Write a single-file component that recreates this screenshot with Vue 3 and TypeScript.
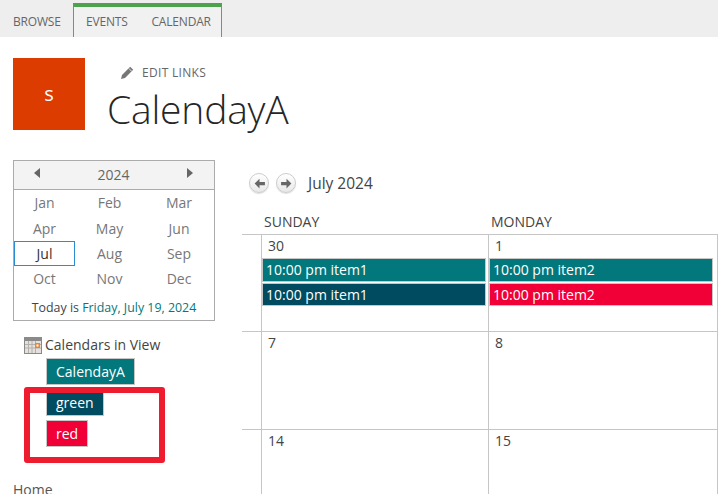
<script setup lang="ts">
const months: string[] = ['Jan','Feb','Mar','Apr','May','Jun','Jul','Aug','Sep','Oct','Nov','Dec']
interface Ev { text: string; color: string }
interface Cell { day: string; events: Ev[] }
const rows: Cell[][] = [
  [
    { day: '30', events: [{ text: '10:00 pm item1', color: 'teal' }, { text: '10:00 pm item1', color: 'navy' }] },
    { day: '1', events: [{ text: '10:00 pm item2', color: 'teal' }, { text: '10:00 pm item2', color: 'red' }] },
  ],
  [{ day: '7', events: [] }, { day: '8', events: [] }],
  [{ day: '14', events: [] }, { day: '15', events: [] }],
]
</script>

<template>
  <div class="page">
    <div class="ribbon">
      <div class="tab plain">BROWSE</div>
      <div class="ctx">
        <div class="tab">EVENTS</div>
        <div class="tab">CALENDAR</div>
      </div>
    </div>

    <div class="head">
      <div class="logo">s</div>
      <div class="titles">
        <div class="edit">
          <svg width="14" height="14" viewBox="0 0 14 14">
            <path d="M10.2 0.8 13.2 3.8 5 12 1 13 2 9z" fill="#777" />
            <path d="M8.8 2.4 11.6 5.2" stroke="#fff" stroke-width="0.8" />
          </svg>
          <span>EDIT LINKS</span>
        </div>
        <div class="title">CalendayA</div>
      </div>
    </div>

    <div class="body">
      <aside class="side">
        <div class="picker">
          <div class="pk-head">
            <span class="tri left"></span>
            <span class="year">2024</span>
            <span class="tri right"></span>
          </div>
          <div class="pk-grid">
            <div v-for="m in months" :key="m" class="mon" :class="{ sel: m === 'Jul' }">{{ m }}</div>
          </div>
          <div class="today">Today is <span class="link">Friday, July 19, 2024</span></div>
        </div>

        <div class="civ">
          <svg width="18" height="17" viewBox="0 0 18 17">
            <rect width="18" height="17" fill="#8a8a8a" />
            <rect x="1" y="4" width="16" height="12" fill="#e4e1dd" />
            <path d="M1 7.5h16M1 11h16M4.5 4v12M8 4v12M11.5 4v12" stroke="#b5b0ab" stroke-width="1" />
            <rect x="11" y="6" width="5" height="5" fill="#e8843a" />
            <rect x="12.5" y="7.5" width="2" height="2" fill="#fff" />
          </svg>
          <span>Calendars in View</span>
        </div>
        <div class="chips">
          <div class="chip teal">CalendayA</div>
          <div class="chip navy">green</div>
          <div class="chip red">red</div>
          <div class="annot"></div>
        </div>
        <div class="home">Home</div>
      </aside>

      <main class="main">
        <div class="nav">
          <span class="circ">
            <svg width="13" height="13" viewBox="0 0 12 12"><path d="M6 1.5 1.5 6 6 10.5V7.5H11V4.5H6z" fill="#666" /></svg>
          </span>
          <span class="circ">
            <svg width="13" height="13" viewBox="0 0 12 12"><path d="M6 1.5 10.5 6 6 10.5V7.5H1V4.5H6z" fill="#666" /></svg>
          </span>
          <span class="month">July 2024</span>
        </div>
        <div class="dow">
          <div>SUNDAY</div>
          <div>MONDAY</div>
        </div>
        <div class="grid">
          <div v-for="(row, i) in rows" :key="i" class="row">
            <div class="gutter"></div>
            <div v-for="cell in row" :key="cell.day" class="cell">
              <div class="day">{{ cell.day }}</div>
              <div v-for="(ev, j) in cell.events" :key="j" class="ev" :class="ev.color">{{ ev.text }}</div>
            </div>
          </div>
        </div>
      </main>
    </div>
  </div>
</template>

<style>
html, body { margin: 0; overflow: hidden; background: #fff; }
</style>

<style scoped>
.page {
  width: 718px;
  height: 494px;
  overflow: hidden;
  font-family: "Open Sans", "Noto Sans", sans-serif;
  color: #444;
  position: relative;
}
.ribbon {
  height: 37px;
  background: #eeeeee;
  display: flex;
  align-items: flex-end;
  padding-left: 13px;
  box-sizing: border-box;
}
.tab {
  font-size: 12px;
  letter-spacing: -0.2px;
  line-height: 16px;
  color: #666;
  padding: 0 13px 7px;
  white-space: nowrap;
}
.tab.plain { padding: 0 14px 7px 0; width: 46px; }
.ctx {
  display: flex;
  height: 34px;
  box-sizing: border-box;
  width: 149px;
  margin-top: 3px;
  border: 1px solid #5fa35f;
  border-top: 4px solid #4ea24e;
  border-bottom: 0;
  align-items: flex-end;
  background: #f1f1f1;
}
.ctx .tab { padding: 0 12px 7px; }
.head {
  display: flex;
  padding: 21px 0 0 13px;
  height: 123px;
  box-sizing: border-box;
}
.logo {
  width: 72px;
  height: 72px;
  background: #dc3c00;
  color: #fff;
  font-size: 20px;
  display: flex;
  align-items: center;
  justify-content: center;
  padding-bottom: 2px;
  box-sizing: border-box;
}
.titles { margin-left: 22px; }
.edit {
  display: flex;
  align-items: center;
  gap: 8px;
  font-size: 12px;
  letter-spacing: 0.3px;
  line-height: 16px;
  color: #666;
  margin: 7px 0 0 13px;
}
.title {
  font-size: 39px;
  font-weight: 300;
  line-height: 50px;
  color: #262626;
  margin-top: 3px;
  letter-spacing: -0.2px;
}
.body { display: flex; }
.side { width: 242px; padding-left: 13px; box-sizing: border-box; flex: none; }
.picker {
  width: 202px;
  height: 161px;
  box-sizing: border-box;
  border: 1px solid #ababab;
}
.pk-head {
  height: 29px;
  background: #f3f3f3;
  border-bottom: 1px solid #ababab;
  display: flex;
  align-items: center;
  justify-content: space-between;
  padding: 0 21px;
  box-sizing: border-box;
}
.year { font-size: 14px; color: #666; margin-top: -1px; }
.tri { width: 0; height: 0; border-top: 5px solid transparent; border-bottom: 5px solid transparent; margin-top: -4px; }
.tri.left { border-right: 6px solid #666; margin-left: -1px; }
.tri.right { border-left: 6px solid #666; }
.pk-grid {
  display: grid;
  grid-template-columns: 61px 69px 70px;
  grid-template-rows: 25px 26px 25px 25px;
}
.mon {
  font-size: 14px;
  color: #777;
  display: flex;
  align-items: center;
  justify-content: center;
  box-sizing: border-box;
}
.sel { border: 1px solid #2a8dd4; color: #333; }
.today { font-size: 12.4px; line-height: 16px; text-align: center; color: #444; margin-top: 9px; white-space: nowrap; }
.link { color: #03787c; }
.civ {
  display: flex;
  align-items: center;
  gap: 3px;
  margin: 14px 0 0 11px;
  font-size: 14px;
  line-height: 20px;
  color: #444;
}
.chips {
  position: relative;
  display: flex;
  flex-direction: column;
  align-items: flex-start;
  gap: 4px;
  margin: 3px 0 0 33px;
}
.chip {
  font-size: 14px;
  line-height: 25px;
  height: 27px;
  padding: 0 9px;
  box-sizing: border-box;
  color: #fff;
  border: 1px solid #c6c6c6;
}
.teal { background: #03787c; }
.navy { background: #004b5f; }
.red { background: #f00037; }
.annot {
  position: absolute;
  left: -22px;
  top: 29px;
  width: 141px;
  height: 76px;
  border: 6px solid #ee1c2e;
  border-radius: 3px;
  box-sizing: border-box;
}
.home { margin-top: 33px; font-size: 14px; line-height: 20px; color: #555; }
.main { flex: 1; min-width: 0; }
.nav { display: flex; align-items: center; padding: 11px 0 0 7px; height: 24px; }
.nav .circ {
  width: 20px;
  height: 20px;
  border-radius: 50%;
  border: 1px solid #ccc;
  box-shadow: 0 1px 1px #ddd;
  box-sizing: border-box;
  display: flex;
  align-items: center;
  justify-content: center;
  background: linear-gradient(#fff, #e8e8e8);
  margin-right: 7px;
}
.month { font-size: 15.5px; color: #444; margin-left: 5px; }
.dow { display: flex; padding-left: 22px; margin-top: 17px; font-size: 14px; line-height: 20px; color: #444; }
.dow > div { width: 227px; }
.grid { border-top: 1px solid #c6c6c6; margin-top: 2px; }
.row { display: flex; height: 98px; box-sizing: border-box; border-bottom: 1px solid #c6c6c6; }
.row:first-child { height: 97px; }
.gutter { width: 19px; border-right: 1px solid #c6c6c6; flex: none; }
.cell { width: 226px; border-right: 1px solid #c6c6c6; flex: none; }
.cell:last-child { width: 228px; }
.day { font-size: 14px; line-height: 22px; margin-left: 6px; color: #444; height: 23px; }
.ev {
  box-sizing: border-box;
  width: 224px;
  height: 24px;
  padding-left: 3px;
  border: 1px solid #c6c6c6;
  font-size: 14px;
  line-height: 22px;
  color: #fff;
  white-space: nowrap;
}
.ev + .ev { margin-top: 1px; height: 23px; line-height: 21px; }
</style>
